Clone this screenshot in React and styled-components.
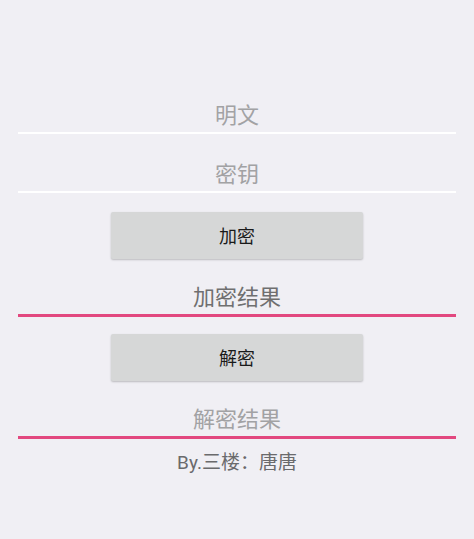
import React, { useState } from "react";
import styled, { createGlobalStyle } from "styled-components";

const GlobalStyle = createGlobalStyle`
  html, body {
    margin: 0;
    padding: 0;
    background: #f0eff4;
  }
  body {
    font-family: Roboto, "Noto Sans CJK SC", sans-serif;
  }
`;

const App = () => {
  const [plain, setPlain] = useState("");
  const [key, setKey] = useState("");

  return (
    <React.Fragment>
      <GlobalStyle />
      <Page>
        <Field>
          <Input
            placeholder="明文"
            value={plain}
            onChange={(e) => setPlain(e.target.value)}
          />
        </Field>
        <Field>
          <Input
            placeholder="密钥"
            value={key}
            onChange={(e) => setKey(e.target.value)}
          />
        </Field>
        <Button>加密</Button>
        <Result $dark>加密结果</Result>
        <Button>解密</Button>
        <Result>解密结果</Result>
        <Footer>By.三楼：唐唐</Footer>
      </Page>
    </React.Fragment>
  );
};

const Page = styled.div`
  width: 474px;
  height: 539px;
  box-sizing: border-box;
  padding: 94px 18px 0 18px;
  display: flex;
  flex-direction: column;
  align-items: stretch;
`;

const Field = styled.div`
  height: 38px;
  border-bottom: 2px solid #ffffff;
  margin-bottom: 19px;
  display: flex;
`;

const Input = styled.input`
  flex: 1;
  border: none;
  outline: none;
  background: transparent;
  text-align: center;
  font-family: Roboto, "Noto Sans CJK SC", sans-serif;
  font-size: 22px;
  color: #333;
  padding: 4px 0 0 0;
  &::placeholder {
    color: #a2a2a4;
  }
`;

const Button = styled.button`
  align-self: center;
  width: 252px;
  height: 47px;
  border: none;
  border-radius: 2px;
  background: #d6d7d7;
  box-shadow: 0 1px 2px rgba(0, 0, 0, 0.22);
  font-family: Roboto, "Noto Sans CJK SC", sans-serif;
  font-size: 18px;
  color: #1a1a1a;
  margin-bottom: 18px;
  padding: 0 0 2px 0;
`;

const Result = styled.div`
  height: 40px;
  box-sizing: border-box;
  padding-bottom: 2px;
  border-bottom: 3px solid #e2487f;
  margin-bottom: 17px;
  display: flex;
  align-items: center;
  justify-content: center;
  font-size: 22px;
  color: ${(props) => (props.$dark ? "#6f6f70" : "#a2a2a4")};
`;

const Footer = styled.div`
  margin-top: -5px;
  text-align: center;
  font-size: 19px;
  line-height: 24px;
  color: #6a6a6c;
`;

export default App;
